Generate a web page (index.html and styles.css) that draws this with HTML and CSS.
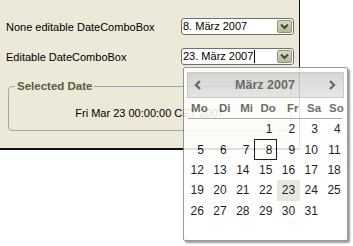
FILE: index.html
```html
<!DOCTYPE html>
<html>
<head>
<meta charset="utf-8">
<link rel="stylesheet" href="styles.css">
</head>
<body>
<div class="panel">
  <div class="row row1">
    <span class="label">None editable DateComboBox</span>
    <div class="combo"><span class="ctext">8. März 2007</span><span class="cbtn"><svg width="9" height="7" viewBox="0 0 9 7"><path d="M1 1.5 L4.5 5 L8 1.5" fill="none" stroke="#3f4a30" stroke-width="2"/></svg></span></div>
  </div>
  <div class="row row2">
    <span class="label">Editable DateComboBox</span>
    <div class="combo"><span class="ctext">23. März 2007<span class="caret"></span></span><span class="cbtn"><svg width="9" height="7" viewBox="0 0 9 7"><path d="M1 1.5 L4.5 5 L8 1.5" fill="none" stroke="#3f4a30" stroke-width="2"/></svg></span></div>
  </div>
  <div class="group">
    <span class="legend">Selected Date</span>
    <div class="gtext">Fri Mar 23 00:00:00 CET 2007</div>
  </div>
</div>

<div class="popup">
  <div class="head">
    <svg class="arr" width="8" height="10" viewBox="0 0 8 10"><path d="M6 1 L2 5 L6 9" fill="none" stroke="#555" stroke-width="2.4"/></svg>
    <span class="month">März 2007</span>
    <svg class="arr" width="8" height="10" viewBox="0 0 8 10"><path d="M2 1 L6 5 L2 9" fill="none" stroke="#555" stroke-width="2.4"/></svg>
  </div>
  <div class="days">
    <span>Mo</span><span>Di</span><span>Mi</span><span>Do</span><span>Fr</span><span>Sa</span><span>So</span>
  </div>
  <div class="grid">
    <span></span><span></span><span></span><span>1</span><span>2</span><span>3</span><span>4</span>
    <span>5</span><span>6</span><span>7</span><span class="cur">8</span><span>9</span><span>10</span><span>11</span>
    <span>12</span><span>13</span><span>14</span><span>15</span><span>16</span><span>17</span><span>18</span>
    <span>19</span><span>20</span><span>21</span><span>22</span><span class="sel">23</span><span>24</span><span>25</span>
    <span>26</span><span>27</span><span>28</span><span>29</span><span>30</span><span>31</span><span></span>
    <span></span><span></span><span></span><span></span><span></span><span></span><span></span>
  </div>
</div>
</body>
</html>
```
FILE: styles.css
```css
html, body {
  margin: 0;
  padding: 0;
  background: #fff;
}
body {
  width: 353px;
  height: 246px;
  overflow: hidden;
  position: relative;
  font-family: "Liberation Sans", Arial, sans-serif;
  font-size: 11px;
  color: #000;
}
.panel {
  width: 299px;
  height: 148px;
  background: #ece9d8;
  border-right: 1px solid #111;
  border-bottom: 2px solid #111;
  display: flex;
  flex-direction: column;
}
.row {
  display: flex;
  align-items: center;
  height: 17px;
}
.row1 { margin-top: 18px; }
.row2 { margin-top: 13px; }
.label {
  width: 181px;
  padding-left: 6px;
  box-sizing: border-box;
}
.combo {
  width: 113px;
  height: 17px;
  box-sizing: border-box;
  background: #fff;
  border: 1px solid #6f6f6f;
  border-radius: 3px;
  display: flex;
  align-items: center;
  justify-content: space-between;
  padding: 0 1px 0 1px;
}
.ctext {
  display: flex;
  align-items: center;
  line-height: 13px;
}
.caret {
  display: inline-block;
  width: 1px;
  height: 13px;
  background: #000;
  margin-left: 1px;
}
.cbtn {
  width: 15px;
  height: 13px;
  box-sizing: border-box;
  border: 1px solid #8c9878;
  border-radius: 2px;
  background: linear-gradient(#d6dcc6, #b0bb98);
  display: flex;
  align-items: center;
  justify-content: center;
}
.group {
  margin: 21px 8px 0 8px;
  height: 43px;
  border: 1px solid #a5a5a5;
  border-radius: 4px;
  position: relative;
  display: flex;
  align-items: center;
  justify-content: center;
}
.legend {
  position: absolute;
  left: 6px;
  top: -8px;
  padding: 0 2px;
  background: #ece9d8;
  font-weight: bold;
  color: #525f42;
  font-size: 11.5px;
  line-height: 14px;
}
.gtext {
  margin-top: 8px;
}
.popup {
  position: absolute;
  left: 183px;
  top: 67px;
  width: 165px;
  height: 174px;
  box-sizing: border-box;
  border: 1px solid #8a8a8a;
  border-radius: 2px;
  background: #fff;
  opacity: 0.87;
  box-shadow: 2px 2px 2px rgba(0,0,0,0.45);
  padding: 4px 3px 0 2px;
  overflow: hidden;
}
.head {
  height: 26px;
  box-sizing: border-box;
  border: 1px solid #c4c4c4;
  background: linear-gradient(#d2d2d2, #e4e4e4);
  margin-left: 1px;
  display: flex;
  align-items: center;
  justify-content: space-between;
  padding: 0 7px 0 6px;
}
.month {
  font-weight: bold;
  color: #5a5a5a;
  font-size: 12.5px;
}
.days {
  display: grid;
  grid-template-columns: repeat(7, 22.7px);
  height: 20px;
  align-items: center;
  border-bottom: 1px solid #a0a0a0;
  margin: 0 2px 0 2px;
  font-weight: bold;
  color: #5a5a5a;
  font-size: 11.5px;
}
.days span {
  text-align: right;
  padding-right: 3px;
}
.grid {
  display: grid;
  grid-template-columns: repeat(7, 22.83px);
  grid-auto-rows: 20.4px;
}
.grid span {
  display: flex;
  align-items: center;
  justify-content: flex-end;
  padding-right: 5px;
  box-sizing: border-box;
  font-size: 12px;
}
.grid .cur {
  border: 1px solid #000;
  padding-right: 4px;
}
.grid .sel {
  background: #e4e4dc;
}
```
